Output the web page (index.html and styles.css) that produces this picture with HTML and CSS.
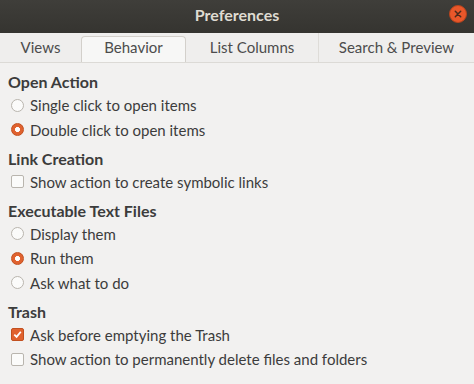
FILE: index.html
```html
<!DOCTYPE html>
<html lang="en">
<head>
    <meta charset="UTF-8">
    <title>Preferences</title>
    <link rel="stylesheet" href="styles.css">
</head>
<body>
    <div class="window">
        <header class="titlebar">
            <span class="title">Preferences</span>
            <button class="close" aria-label="Close">
                <svg width="18" height="18" viewBox="0 0 18 18">
                    <circle cx="9" cy="9" r="8.5" fill="#e9572a" stroke="#b8441d" stroke-width="1"/>
                    <path d="M6.3 6.3 L11.7 11.7 M11.7 6.3 L6.3 11.7" stroke="#4a2a1c" stroke-width="1.5" stroke-linecap="round"/>
                </svg>
            </button>
        </header>

        <nav class="tabs">
            <div class="tab">Views</div>
            <div class="tab active">Behavior</div>
            <div class="tab">List Columns</div>
            <div class="tab">Search &amp; Preview</div>
        </nav>

        <main class="content">
            <section class="group">
                <h2>Open Action</h2>
                <label class="option"><span class="radio"></span>Single click to open items</label>
                <label class="option"><span class="radio checked"></span>Double click to open items</label>
            </section>

            <section class="group">
                <h2>Link Creation</h2>
                <label class="option"><span class="check"></span>Show action to create symbolic links</label>
            </section>

            <section class="group">
                <h2>Executable Text Files</h2>
                <label class="option"><span class="radio"></span>Display them</label>
                <label class="option"><span class="radio checked"></span>Run them</label>
                <label class="option"><span class="radio"></span>Ask what to do</label>
            </section>

            <section class="group">
                <h2>Trash</h2>
                <label class="option">
                    <span class="check checked">
                        <svg width="9" height="9" viewBox="0 0 9 9"><path d="M1.3 4.6 L3.6 6.9 L7.8 1.8" fill="none" stroke="#fff" stroke-width="1.8"/></svg>
                    </span>Ask before emptying the Trash
                </label>
                <label class="option"><span class="check"></span>Show action to permanently delete files and folders</label>
            </section>
        </main>
    </div>
</body>
</html>
```

FILE: styles.css
```css
body {
    margin: 0;
    padding: 0;
    font-family: Lato, "Open Sans", sans-serif;
    font-size: 15px;
    color: #3c3c3c;
    background-color: #f2f1f0;
}
.window {
    width: 474px;
    height: 384px;
    overflow: hidden;
    background: #f2f1f0;
}
.titlebar {
    height: 33px;
    display: flex;
    align-items: center;
    justify-content: center;
    position: relative;
    background: linear-gradient(#3f3e3a, #353430); /* dark Ambiance bar */
    color: #dfdbd2;
}
.title {
    font-weight: bold;
    font-size: 16px;
    margin-top: -5px;
}
.close {
    position: absolute;
    right: 7px;
    top: 5px;
    width: 18px;
    height: 18px;
    padding: 0;
    border: none;
    background: none;
}
.close svg {
    display: block;
}
.tabs {
    display: grid;
    grid-template-columns: 81px 105px 132px 1fr;
    height: 29px;
    background: #efeeed;
    border-bottom: 1px solid #dcdad6;
}
.tab {
    display: flex;
    align-items: center;
    justify-content: center;
    padding-bottom: 2px;
    color: #4c4c4c;
    border-left: 1px solid #dedcd8;
}
.tab:first-child {
    border-left: none;
}
.tab.active {
    margin-top: 3px;
    padding-bottom: 5px;
    background: #f7f7f6;
    border: 1px solid #d3d0cb;
    border-bottom: none;
    border-radius: 4px 4px 0 0;
}
.tab.active + .tab {
    border-left: none;
}
.content {
    padding: 7px 8px 0 8px;
}
.group {
    margin-bottom: 4.5px;
}
.group h2 {
    margin: 0;
    font-size: 16px;
    font-weight: bold;
    line-height: 23px;
    color: #3c3c3c;
}
.option {
    display: flex;
    align-items: center;
    height: 24.5px;
    padding-left: 3px;
}
.radio,
.check {
    width: 11px;
    height: 11px;
    margin-right: 6px;
    border: 1px solid #b9b5ae;
    background: #fbfbfa;
    flex-shrink: 0;
}
.radio {
    border-radius: 50%;
}
.check {
    border-radius: 2px;
    display: flex;
    align-items: center;
    justify-content: center;
}
.radio.checked {
    background: radial-gradient(circle, #fff 0 2.2px, #e0622f 2.8px);
    border-color: #c2501f;
}
.check.checked {
    background: #e0622f;
    border-color: #c2501f;
}
```
